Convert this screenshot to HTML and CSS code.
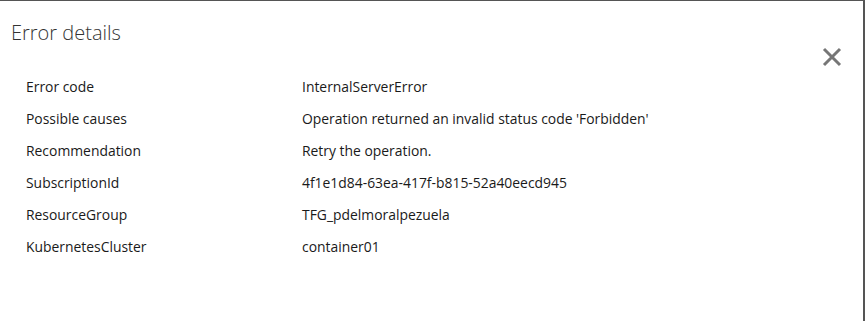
FILE: index.html
```html
<!DOCTYPE html>
<html>
<head>
<meta charset="utf-8">
<link rel="stylesheet" href="styles.css">
</head>
<body>
<div class="panel">
  <div class="header">
    <h1 class="title">Error details</h1>
    <button class="close" aria-label="Close">
      <svg width="20" height="20" viewBox="0 0 20 20"><path d="M2 2 L18 18 M18 2 L2 18" stroke="#767676" stroke-width="3" fill="none"/></svg>
    </button>
  </div>
  <div class="details">
    <div class="label">Error code</div><div class="value">InternalServerError</div>
    <div class="label">Possible causes</div><div class="value">Operation returned an invalid status code 'Forbidden'</div>
    <div class="label">Recommendation</div><div class="value">Retry the operation.</div>
    <div class="label">SubscriptionId</div><div class="value">4f1e1d84-63ea-417f-b815-52a40eecd945</div>
    <div class="label">ResourceGroup</div><div class="value">TFG_pdelmoralpezuela</div>
    <div class="label">KubernetesCluster</div><div class="value">container01</div>
  </div>
</div>
</body>
</html>
```
FILE: styles.css
```css
html, body {
  margin: 0;
  padding: 0;
  background: #fff;
}
.panel {
  box-sizing: border-box;
  width: 865px;
  height: 321px;
  border-top: 1px solid #555;
  border-right: 2px solid #555;
  font-family: "Open Sans", "Noto Sans", sans-serif;
  color: #1a1a1a;
}
.header {
  display: flex;
  justify-content: space-between;
  align-items: flex-start;
  padding: 19px 21px 0 11px;
}
.title {
  margin: 0;
  font-size: 20px;
  font-weight: 300;
  line-height: 26px;
  color: #333;
}
.close {
  margin-top: 27px;
  padding: 0;
  border: 0;
  background: none;
  width: 20px;
  height: 20px;
}
.close svg { display: block; }
.details {
  display: grid;
  grid-template-columns: 276px 1fr;
  grid-auto-rows: 32px;
  padding: 0 0 0 26px;
  margin-top: 10px;
  font-size: 13.9px;
  line-height: 20px;
}
```
